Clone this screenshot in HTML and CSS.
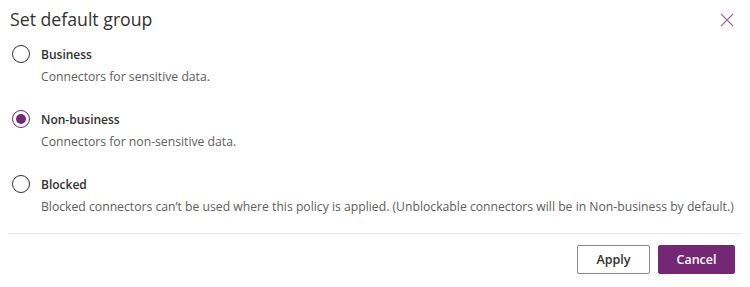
FILE: index.html
```html
<!DOCTYPE html>
<html>
<head>
<meta charset="utf-8">
<link rel="stylesheet" href="styles.css">
</head>
<body>
<div class="dialog">
  <div class="header">
    <h1 class="title">Set default group</h1>
    <button class="close" aria-label="Close">
      <svg width="14" height="14" viewBox="0 0 14 14"><path d="M1 1 L13 13 M13 1 L1 13" stroke="#a569a5" stroke-width="1.2" fill="none"/></svg>
    </button>
  </div>
  <div class="options">
    <div class="option">
      <div class="option-row"><span class="radio"></span><span class="label">Business</span></div>
      <div class="desc">Connectors for sensitive data.</div>
    </div>
    <div class="option">
      <div class="option-row"><span class="radio checked"></span><span class="label">Non-business</span></div>
      <div class="desc">Connectors for non-sensitive data.</div>
    </div>
    <div class="option">
      <div class="option-row"><span class="radio"></span><span class="label">Blocked</span></div>
      <div class="desc">Blocked connectors can’t be used where this policy is applied. (Unblockable connectors will be in Non-business by default.)</div>
    </div>
  </div>
  <div class="divider"></div>
  <div class="footer">
    <button class="btn btn-secondary">Apply</button>
    <button class="btn btn-primary">Cancel</button>
  </div>
</div>
</body>
</html>
```
FILE: styles.css
```css
html, body {
  margin: 0;
  padding: 0;
  background: #ffffff;
}
body {
  font-family: "Open Sans", "Noto Sans", sans-serif;
  color: #323130;
  width: 750px;
  height: 287px;
  overflow: hidden;
}
.dialog {
  display: flex;
  flex-direction: column;
}
.header {
  display: flex;
  justify-content: space-between;
  align-items: flex-start;
  padding: 5px 16px 0 10px;
  height: 44px;
  box-sizing: border-box;
}
.title {
  margin: 0;
  font-size: 17.7px;
  font-weight: 400;
  line-height: 28px;
  color: #323130;
}
.close {
  border: 0;
  background: none;
  padding: 0;
  margin-top: 8px;
  width: 14px;
  height: 14px;
  display: flex;
}
.options {
  display: flex;
  flex-direction: column;
  gap: 22px;
  padding-left: 12px;
}
.option-row {
  display: flex;
  align-items: center;
  height: 20px;
}
.radio {
  width: 18px;
  height: 18px;
  box-sizing: border-box;
  border: 1px solid #323130;
  border-radius: 50%;
  margin-right: 11px;
  display: flex;
  align-items: center;
  justify-content: center;
}
.radio.checked {
  border-color: #742774;
}
.radio.checked::after {
  content: "";
  width: 10px;
  height: 10px;
  border-radius: 50%;
  background: #742774;
}
.label {
  font-size: 12px;
  font-weight: 600;
  color: #323130;
}
.desc {
  margin-top: 3px;
  padding-left: 29px;
  font-size: 12.2px;
  line-height: 20px;
  color: #605e5c;
  white-space: nowrap;
}
.divider {
  margin: 16px 8px 0 8px;
  height: 1px;
  background: #edebe9;
}
.footer {
  display: flex;
  justify-content: flex-end;
  gap: 8px;
  padding: 11px 15px 0 0;
}
.btn {
  height: 29px;
  box-sizing: border-box;
  font-family: "Open Sans", "Noto Sans", sans-serif;
  font-size: 12.5px;
  font-weight: 600;
  border-radius: 2px;
  padding: 0;
}
.btn-secondary {
  width: 73px;
  background: #ffffff;
  border: 1px solid #8a8886;
  color: #323130;
}
.btn-primary {
  width: 77px;
  background: #742774;
  border: 1px solid #742774;
  color: #ffffff;
}
```
